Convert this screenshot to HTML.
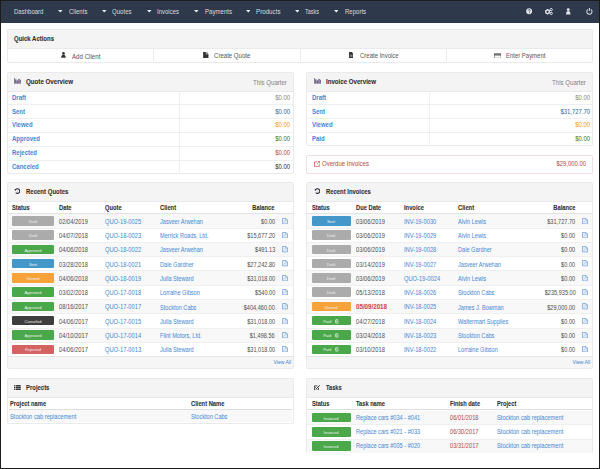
<!DOCTYPE html><html><head><meta charset="utf-8"><style>html,body{margin:0;padding:0;width:600px;height:469px;overflow:hidden;background:#fff;font-family:"Liberation Sans",sans-serif;}.t{position:absolute;display:flex;align-items:center;white-space:nowrap;line-height:1;}</style></head><body><div id="wrap" style="position:absolute;left:0;top:0;width:600px;height:469px;filter:none">
<div style="position:absolute;left:0px;top:0px;width:600.00px;height:22.60px;background:#2e3a4b"></div>
<div class="t" style="left:13.8px;top:4.80px;height:14.50px;justify-content:flex-start;font-size:7.32px;font-weight:400;color:#d3d6dc;transform:scaleX(0.8239);transform-origin:0 50%;-webkit-text-stroke:0.04px #d3d6dc;">Dashboard</div>
<div class="t" style="left:69px;top:4.80px;height:14.50px;justify-content:flex-start;font-size:7.32px;font-weight:400;color:#d3d6dc;transform:scaleX(0.8224);transform-origin:0 50%;-webkit-text-stroke:0.04px #d3d6dc;">Clients</div>
<svg style="position:absolute;left:58px;top:10.2px" width="4.6" height="2.6" viewBox="0 0 46 26"><path d="M0 0H46L23 26Z" fill="#e8eaee"/></svg>
<div class="t" style="left:112.4px;top:4.80px;height:14.50px;justify-content:flex-start;font-size:7.32px;font-weight:400;color:#d3d6dc;transform:scaleX(0.8305);transform-origin:0 50%;-webkit-text-stroke:0.04px #d3d6dc;">Quotes</div>
<svg style="position:absolute;left:102px;top:10.2px" width="4.6" height="2.6" viewBox="0 0 46 26"><path d="M0 0H46L23 26Z" fill="#e8eaee"/></svg>
<div class="t" style="left:157.4px;top:4.80px;height:14.50px;justify-content:flex-start;font-size:7.32px;font-weight:400;color:#d3d6dc;transform:scaleX(0.8193);transform-origin:0 50%;-webkit-text-stroke:0.04px #d3d6dc;">Invoices</div>
<svg style="position:absolute;left:147px;top:10.2px" width="4.6" height="2.6" viewBox="0 0 46 26"><path d="M0 0H46L23 26Z" fill="#e8eaee"/></svg>
<div class="t" style="left:204.5px;top:4.80px;height:14.50px;justify-content:flex-start;font-size:7.32px;font-weight:400;color:#d3d6dc;transform:scaleX(0.8296);transform-origin:0 50%;-webkit-text-stroke:0.04px #d3d6dc;">Payments</div>
<svg style="position:absolute;left:194px;top:10.2px" width="4.6" height="2.6" viewBox="0 0 46 26"><path d="M0 0H46L23 26Z" fill="#e8eaee"/></svg>
<div class="t" style="left:256px;top:4.80px;height:14.50px;justify-content:flex-start;font-size:7.32px;font-weight:400;color:#d3d6dc;transform:scaleX(0.8482);transform-origin:0 50%;-webkit-text-stroke:0.04px #d3d6dc;">Products</div>
<svg style="position:absolute;left:245.6px;top:10.2px" width="4.6" height="2.6" viewBox="0 0 46 26"><path d="M0 0H46L23 26Z" fill="#e8eaee"/></svg>
<div class="t" style="left:305px;top:4.80px;height:14.50px;justify-content:flex-start;font-size:7.32px;font-weight:400;color:#d3d6dc;transform:scaleX(0.7482);transform-origin:0 50%;-webkit-text-stroke:0.04px #d3d6dc;">Tasks</div>
<svg style="position:absolute;left:294.6px;top:10.2px" width="4.6" height="2.6" viewBox="0 0 46 26"><path d="M0 0H46L23 26Z" fill="#e8eaee"/></svg>
<div class="t" style="left:344.7px;top:4.80px;height:14.50px;justify-content:flex-start;font-size:7.32px;font-weight:400;color:#d3d6dc;transform:scaleX(0.8233);transform-origin:0 50%;-webkit-text-stroke:0.04px #d3d6dc;">Reports</div>
<svg style="position:absolute;left:333.6px;top:10.2px" width="4.6" height="2.6" viewBox="0 0 46 26"><path d="M0 0H46L23 26Z" fill="#e8eaee"/></svg>
<svg style="position:absolute;left:525.8px;top:8.4px" width="6.4" height="6.4" viewBox="0 0 14 14"><circle cx="7" cy="7" r="6.6" fill="#dfe2e6"/><path d="M4.9 5.4c0-1.3 1-2.1 2.2-2.1 1.3 0 2.1.8 2.1 1.8 0 1.4-1.6 1.5-1.6 2.8" stroke="#2e3a4b" stroke-width="1.5" fill="none"/><rect x="6.7" y="9.3" width="1.6" height="1.6" fill="#2e3a4b"/></svg>
<svg style="position:absolute;left:545.3px;top:8.2px" width="8" height="6.8" viewBox="0 0 16 13.6"><circle cx="5.2" cy="7.6" r="3.6" fill="none" stroke="#dfe2e6" stroke-width="2.6"/><rect x="4.1" y="2.2" width="2.2" height="2" fill="#dfe2e6" transform="rotate(0 5.2 7.6)"/><rect x="4.1" y="2.2" width="2.2" height="2" fill="#dfe2e6" transform="rotate(60 5.2 7.6)"/><rect x="4.1" y="2.2" width="2.2" height="2" fill="#dfe2e6" transform="rotate(120 5.2 7.6)"/><rect x="4.1" y="2.2" width="2.2" height="2" fill="#dfe2e6" transform="rotate(180 5.2 7.6)"/><rect x="4.1" y="2.2" width="2.2" height="2" fill="#dfe2e6" transform="rotate(240 5.2 7.6)"/><rect x="4.1" y="2.2" width="2.2" height="2" fill="#dfe2e6" transform="rotate(300 5.2 7.6)"/><circle cx="12.4" cy="3.2" r="2.3" fill="none" stroke="#dfe2e6" stroke-width="2"/><circle cx="12.4" cy="10.6" r="2.3" fill="none" stroke="#dfe2e6" stroke-width="2"/></svg>
<svg style="position:absolute;left:566.2px;top:8.3px" width="4.5" height="6.4" viewBox="0 0 9 13"><circle cx="4.5" cy="3.3" r="3" fill="#dfe2e6"/><path d="M0 13C0 8.5 1.5 6.2 4.5 6.2S9 8.5 9 13Z" fill="#dfe2e6"/></svg>
<svg style="position:absolute;left:585.8px;top:8.3px" width="6.8" height="6.6" viewBox="0 0 14 13.5"><path d="M4.2 2.8A5.4 5.4 0 1 0 9.8 2.8" fill="none" stroke="#dfe2e6" stroke-width="2.1"/><path d="M7 0.2V6.2" stroke="#dfe2e6" stroke-width="2.1"/></svg>
<div style="position:absolute;left:6.6px;top:29.4px;width:586.40px;height:33.40px;box-sizing:border-box;border:1px solid #eaeaea;border-radius:2px;background:#fff;overflow:hidden"><div style="position:absolute;left:0;top:0;right:0;height:17.80px;background:#f4f4f4;border-bottom:1px solid #eaeaea"></div></div>
<div class="t" style="left:14px;top:30.20px;height:18.80px;justify-content:flex-start;font-size:6.50px;font-weight:700;color:#333;transform:scaleX(0.9204);transform-origin:0 50%;-webkit-text-stroke:0.1px #333;">Quick Actions</div>
<div style="position:absolute;left:153.4px;top:47.7px;width:1.00px;height:13.60px;background:#eaeaea"></div>
<div style="position:absolute;left:299.8px;top:47.7px;width:1.00px;height:13.60px;background:#eaeaea"></div>
<div style="position:absolute;left:446.3px;top:47.7px;width:1.00px;height:13.60px;background:#eaeaea"></div>
<svg style="position:absolute;left:61.2px;top:52.4px" width="4.9" height="5.8" viewBox="0 0 10 12"><circle cx="5" cy="3" r="2.9" fill="#333"/><path d="M0.3 12C0.3 7.8 1.8 5.8 5 5.8C8.2 5.8 9.7 7.8 9.7 12Z" fill="#333"/></svg>
<div class="t" style="left:72px;top:49.30px;height:14.60px;justify-content:flex-start;font-size:7.01px;font-weight:400;color:#5a5a5a;transform:scaleX(0.8775);transform-origin:0 50%;-webkit-text-stroke:0.04px #5a5a5a;">Add Client</div>
<svg style="position:absolute;left:203.2px;top:52px" width="5.6" height="6.4" viewBox="0 0 10 12"><path d="M0 0H5L5 4H10V12H0Z" fill="#333"/><path d="M6 0L10 3.2H6Z" fill="#333"/></svg>
<div class="t" style="left:214px;top:49.30px;height:14.60px;justify-content:flex-start;font-size:6.96px;font-weight:400;color:#5a5a5a;transform:scaleX(0.8715);transform-origin:0 50%;-webkit-text-stroke:0.04px #5a5a5a;">Create Quote</div>
<svg style="position:absolute;left:348.6px;top:52.2px" width="4.6" height="6" viewBox="0 0 9 12"><path d="M0 0H5.5L9 3.5V12H0Z" fill="#333"/><path d="M2 6.5H7M2 8.5H7" stroke="#fff" stroke-width=".9"/></svg>
<div class="t" style="left:359.6px;top:49.30px;height:14.60px;justify-content:flex-start;font-size:6.92px;font-weight:400;color:#5a5a5a;transform:scaleX(0.8693);transform-origin:0 50%;-webkit-text-stroke:0.04px #5a5a5a;">Create Invoice</div>
<svg style="position:absolute;left:493.6px;top:52.8px" width="7.4" height="5.6" viewBox="0 0 15 11"><rect x="0.5" y="0.5" width="14" height="10" rx="1" fill="none" stroke="#333" stroke-width="1.3"/><rect x="0.5" y="2.5" width="14" height="2.2" fill="#333"/></svg>
<div class="t" style="left:505.6px;top:49.30px;height:14.60px;justify-content:flex-start;font-size:6.85px;font-weight:400;color:#5a5a5a;transform:scaleX(0.8691);transform-origin:0 50%;-webkit-text-stroke:0.04px #5a5a5a;">Enter Payment</div>
<div style="position:absolute;left:6.8px;top:71.6px;width:287.20px;height:102.10px;box-sizing:border-box;border:1px solid #eaeaea;border-radius:2px;background:#fff;overflow:hidden"><div style="position:absolute;left:0;top:0;right:0;height:18.40px;background:#f4f4f4;border-bottom:1px solid #eaeaea"></div></div>
<div class="t" style="left:26.3px;top:72.40px;height:19.40px;justify-content:flex-start;font-size:6.50px;font-weight:700;color:#333;transform:scaleX(0.9498);transform-origin:0 50%;-webkit-text-stroke:0.1px #333;">Quote Overview</div>
<svg style="position:absolute;left:13.8px;top:78.4px" width="7.4" height="5.6" viewBox="0 0 15 11"><path d="M0 0V11H15V9.6H1.4V0Z" fill="#5a4f6e"/><rect x="2.4" y="2.5" width="2.6" height="7.3" fill="#5f5078"/><rect x="5.6" y="4.6" width="2.6" height="5.2" fill="#6a5c84"/><rect x="8.8" y="1.6" width="2.6" height="8.2" fill="#5f5078"/><rect x="12" y="3.6" width="2.6" height="6.2" fill="#7a6c94"/></svg>
<div class="t" style="right:313.40px;top:72.80px;height:18.60px;justify-content:flex-end;font-size:7.01px;font-weight:400;color:#888;transform:scaleX(0.8696);transform-origin:100% 50%;-webkit-text-stroke:0.04px #888;">This Quarter</div>
<div class="t" style="left:12px;top:91.40px;height:13.78px;justify-content:flex-start;font-size:6.90px;font-weight:700;color:#4287d6;transform:scaleX(0.8696);transform-origin:0 50%;-webkit-text-stroke:0px #4287d6;">Draft</div>
<div class="t" style="right:309.80px;top:91.40px;height:13.78px;justify-content:flex-end;font-size:6.84px;font-weight:400;color:#8a8a8a;transform:scaleX(0.8696);transform-origin:100% 50%;-webkit-text-stroke:0.04px #8a8a8a;">$0.00</div>
<div style="position:absolute;left:8px;top:104.38333333333333px;width:284.60px;height:0.90px;background:#efefef"></div>
<div class="t" style="left:12px;top:105.18px;height:13.78px;justify-content:flex-start;font-size:6.90px;font-weight:700;color:#4287d6;transform:scaleX(0.8696);transform-origin:0 50%;-webkit-text-stroke:0px #4287d6;">Sent</div>
<div class="t" style="right:309.80px;top:105.18px;height:13.78px;justify-content:flex-end;font-size:6.84px;font-weight:400;color:#2f6ea8;transform:scaleX(0.8696);transform-origin:100% 50%;-webkit-text-stroke:0.04px #2f6ea8;">$0.00</div>
<div style="position:absolute;left:8px;top:118.16666666666667px;width:284.60px;height:0.90px;background:#efefef"></div>
<div class="t" style="left:12px;top:118.97px;height:13.78px;justify-content:flex-start;font-size:6.90px;font-weight:700;color:#4287d6;transform:scaleX(0.8696);transform-origin:0 50%;-webkit-text-stroke:0px #4287d6;">Viewed</div>
<div class="t" style="right:309.80px;top:118.97px;height:13.78px;justify-content:flex-end;font-size:6.84px;font-weight:400;color:#f39c2c;transform:scaleX(0.8696);transform-origin:100% 50%;-webkit-text-stroke:0.04px #f39c2c;">$0.00</div>
<div style="position:absolute;left:8px;top:131.95px;width:284.60px;height:0.90px;background:#efefef"></div>
<div class="t" style="left:12px;top:132.75px;height:13.78px;justify-content:flex-start;font-size:6.90px;font-weight:700;color:#4287d6;transform:scaleX(0.8696);transform-origin:0 50%;-webkit-text-stroke:0px #4287d6;">Approved</div>
<div class="t" style="right:309.80px;top:132.75px;height:13.78px;justify-content:flex-end;font-size:6.84px;font-weight:400;color:#2f7f2f;transform:scaleX(0.8696);transform-origin:100% 50%;-webkit-text-stroke:0.04px #2f7f2f;">$0.00</div>
<div style="position:absolute;left:8px;top:145.73333333333335px;width:284.60px;height:0.90px;background:#efefef"></div>
<div class="t" style="left:12px;top:146.53px;height:13.78px;justify-content:flex-start;font-size:6.90px;font-weight:700;color:#4287d6;transform:scaleX(0.8696);transform-origin:0 50%;-webkit-text-stroke:0px #4287d6;">Rejected</div>
<div class="t" style="right:309.80px;top:146.53px;height:13.78px;justify-content:flex-end;font-size:6.84px;font-weight:400;color:#b94a48;transform:scaleX(0.8696);transform-origin:100% 50%;-webkit-text-stroke:0.04px #b94a48;">$0.00</div>
<div style="position:absolute;left:8px;top:159.51666666666668px;width:284.60px;height:0.90px;background:#efefef"></div>
<div class="t" style="left:12px;top:160.32px;height:13.78px;justify-content:flex-start;font-size:6.90px;font-weight:700;color:#4287d6;transform:scaleX(0.8696);transform-origin:0 50%;-webkit-text-stroke:0px #4287d6;">Canceled</div>
<div class="t" style="right:309.80px;top:160.32px;height:13.78px;justify-content:flex-end;font-size:6.84px;font-weight:400;color:#333;transform:scaleX(0.8696);transform-origin:100% 50%;-webkit-text-stroke:0.04px #333;">$0.00</div>
<div style="position:absolute;left:179.3px;top:90.6px;width:0.90px;height:81.70px;background:#efefef"></div>
<div style="position:absolute;left:306px;top:71.6px;width:287.00px;height:74.40px;box-sizing:border-box;border:1px solid #eaeaea;border-radius:2px;background:#fff;overflow:hidden"><div style="position:absolute;left:0;top:0;right:0;height:18.40px;background:#f4f4f4;border-bottom:1px solid #eaeaea"></div></div>
<div class="t" style="left:325.8px;top:72.40px;height:19.40px;justify-content:flex-start;font-size:6.50px;font-weight:700;color:#333;transform:scaleX(0.9415);transform-origin:0 50%;-webkit-text-stroke:0.1px #333;">Invoice Overview</div>
<svg style="position:absolute;left:313.6px;top:78.4px" width="7.4" height="5.6" viewBox="0 0 15 11"><path d="M0 0V11H15V9.6H1.4V0Z" fill="#5a4f6e"/><rect x="2.4" y="2.5" width="2.6" height="7.3" fill="#5f5078"/><rect x="5.6" y="4.6" width="2.6" height="5.2" fill="#6a5c84"/><rect x="8.8" y="1.6" width="2.6" height="8.2" fill="#5f5078"/><rect x="12" y="3.6" width="2.6" height="6.2" fill="#7a6c94"/></svg>
<div class="t" style="right:14.30px;top:72.80px;height:18.60px;justify-content:flex-end;font-size:7.01px;font-weight:400;color:#888;transform:scaleX(0.8696);transform-origin:100% 50%;-webkit-text-stroke:0.04px #888;">This Quarter</div>
<div class="t" style="left:311.5px;top:91.40px;height:13.78px;justify-content:flex-start;font-size:6.90px;font-weight:700;color:#4287d6;transform:scaleX(0.8696);transform-origin:0 50%;-webkit-text-stroke:0px #4287d6;">Draft</div>
<div class="t" style="right:9.80px;top:91.40px;height:13.78px;justify-content:flex-end;font-size:6.84px;font-weight:400;color:#8a8a8a;transform:scaleX(0.8696);transform-origin:100% 50%;-webkit-text-stroke:0.04px #8a8a8a;">$0.00</div>
<div style="position:absolute;left:307.5px;top:104.38333333333333px;width:284.10px;height:0.90px;background:#efefef"></div>
<div class="t" style="left:311.5px;top:105.18px;height:13.78px;justify-content:flex-start;font-size:6.90px;font-weight:700;color:#4287d6;transform:scaleX(0.8696);transform-origin:0 50%;-webkit-text-stroke:0px #4287d6;">Sent</div>
<div class="t" style="right:9.80px;top:105.18px;height:13.78px;justify-content:flex-end;font-size:6.84px;font-weight:400;color:#2f6ea8;transform:scaleX(0.8696);transform-origin:100% 50%;-webkit-text-stroke:0.04px #2f6ea8;">$31,727.70</div>
<div style="position:absolute;left:307.5px;top:118.16666666666667px;width:284.10px;height:0.90px;background:#efefef"></div>
<div class="t" style="left:311.5px;top:118.97px;height:13.78px;justify-content:flex-start;font-size:6.90px;font-weight:700;color:#4287d6;transform:scaleX(0.8696);transform-origin:0 50%;-webkit-text-stroke:0px #4287d6;">Viewed</div>
<div class="t" style="right:9.80px;top:118.97px;height:13.78px;justify-content:flex-end;font-size:6.84px;font-weight:400;color:#f39c2c;transform:scaleX(0.8696);transform-origin:100% 50%;-webkit-text-stroke:0.04px #f39c2c;">$0.00</div>
<div style="position:absolute;left:307.5px;top:131.95px;width:284.10px;height:0.90px;background:#efefef"></div>
<div class="t" style="left:311.5px;top:132.75px;height:13.78px;justify-content:flex-start;font-size:6.90px;font-weight:700;color:#4287d6;transform:scaleX(0.8696);transform-origin:0 50%;-webkit-text-stroke:0px #4287d6;">Paid</div>
<div class="t" style="right:9.80px;top:132.75px;height:13.78px;justify-content:flex-end;font-size:6.84px;font-weight:400;color:#2f7f2f;transform:scaleX(0.8696);transform-origin:100% 50%;-webkit-text-stroke:0.04px #2f7f2f;">$0.00</div>
<div style="position:absolute;left:429px;top:90.6px;width:0.90px;height:54.00px;background:#efefef"></div>
<div style="position:absolute;left:306px;top:154.5px;width:287px;height:19px;box-sizing:border-box;border:1px solid #f2dfe2;border-radius:2px;background:#fff"></div>
<svg style="position:absolute;left:314px;top:160.6px" width="6.2" height="6.2" viewBox="0 0 12 12"><path d="M6 1.8H1V11H10.2V6" fill="none" stroke="#c0504d" stroke-width="1.4"/><path d="M6 6L11 1M7.5 0.8H11.2V4.5" fill="none" stroke="#c0504d" stroke-width="1.4"/></svg>
<div class="t" style="left:322px;top:155.50px;height:18.60px;justify-content:flex-start;font-size:6.95px;font-weight:400;color:#b5504d;transform:scaleX(0.8696);transform-origin:0 50%;-webkit-text-stroke:0.04px #b5504d;">Overdue Invoices</div>
<div class="t" style="right:13.80px;top:155.50px;height:18.60px;justify-content:flex-end;font-size:6.79px;font-weight:400;color:#b5504d;transform:scaleX(0.8696);transform-origin:100% 50%;-webkit-text-stroke:0.04px #b5504d;">$29,000.00</div>
<div style="position:absolute;left:6.6px;top:181.8px;width:287.40px;height:187.00px;box-sizing:border-box;border:1px solid #eaeaea;border-radius:2px;background:#fff;overflow:hidden"><div style="position:absolute;left:0;top:0;right:0;height:18.20px;background:#f4f4f4;border-bottom:1px solid #eaeaea"></div></div>
<div class="t" style="left:12px;top:201.40px;height:13.10px;justify-content:flex-start;font-size:6.67px;font-weight:700;color:#333;transform:scaleX(0.8696);transform-origin:0 50%;-webkit-text-stroke:0.1px #333;">Status</div>
<div class="t" style="left:59px;top:201.40px;height:13.10px;justify-content:flex-start;font-size:6.67px;font-weight:700;color:#333;transform:scaleX(0.8696);transform-origin:0 50%;-webkit-text-stroke:0.1px #333;">Date</div>
<div class="t" style="left:105.3px;top:201.40px;height:13.10px;justify-content:flex-start;font-size:6.67px;font-weight:700;color:#333;transform:scaleX(0.8696);transform-origin:0 50%;-webkit-text-stroke:0.1px #333;">Quote</div>
<div class="t" style="left:159.9px;top:201.40px;height:13.10px;justify-content:flex-start;font-size:6.67px;font-weight:700;color:#333;transform:scaleX(0.8696);transform-origin:0 50%;-webkit-text-stroke:0.1px #333;">Client</div>
<div class="t" style="right:325.00px;top:201.40px;height:13.10px;justify-content:flex-end;font-size:6.67px;font-weight:700;color:#333;transform:scaleX(0.8696);transform-origin:100% 50%;-webkit-text-stroke:0.1px #333;">Balance</div>
<div style="position:absolute;left:7.6px;top:212.9px;width:285.40px;height:1.00px;background:#e2e2e2"></div>
<div style="position:absolute;left:7.6px;top:214.0px;width:285.40px;height:13.67px;background:#f8f8f8"></div>
<div style="position:absolute;left:12px;top:216.09px;width:42.40px;height:9.5px;background:#ababab;border-radius:1.2px"></div>
<div class="t" style="left:-66.8px;width:200px;top:217.39px;height:9.50px;justify-content:center;font-size:4.32px;font-weight:400;color:#f0f0f0;transform:scaleX(0.9259);transform-origin:50% 50%;-webkit-text-stroke:0px #f0f0f0;">Draft</div>
<div class="t" style="left:59px;top:215.00px;height:14.27px;justify-content:flex-start;font-size:6.67px;font-weight:400;color:#555;transform:scaleX(0.8696);transform-origin:0 50%;-webkit-text-stroke:0.04px #555;">02/04/2019</div>
<div class="t" style="left:105.3px;top:215.00px;height:14.27px;justify-content:flex-start;font-size:6.61px;font-weight:400;color:#4a8cd8;transform:scaleX(0.8696);transform-origin:0 50%;-webkit-text-stroke:0.04px #4a8cd8;">QUO-19-0025</div>
<div class="t" style="left:159.9px;top:215.00px;height:14.27px;justify-content:flex-start;font-size:6.44px;font-weight:400;color:#4a8cd8;transform:scaleX(0.8696);transform-origin:0 50%;-webkit-text-stroke:0.04px #4a8cd8;">Jasveer Arwehan</div>
<div class="t" style="right:325.00px;top:215.00px;height:14.27px;justify-content:flex-end;font-size:6.44px;font-weight:400;color:#555;transform:scaleX(0.8696);transform-origin:100% 50%;-webkit-text-stroke:0.04px #555;">$0.00</div>
<svg style="position:absolute;left:282px;top:217.64px" width="6" height="6.4" viewBox="0 0 12 13"><path d="M1 1H7.8L11 4.2V12H1Z" fill="#eef3fc" stroke="#6d9be0" stroke-width="1.5"/><path d="M7.5 1V4.5H11" fill="none" stroke="#6d9be0" stroke-width="1.2"/><path d="M3.2 10C4.5 8.5 5 7 5 5.5C6 7.5 7.5 8.5 9 8.8" fill="none" stroke="#9dbcec" stroke-width="1"/></svg>
<div style="position:absolute;left:7.6px;top:227.67000000000002px;width:285.40px;height:0.80px;background:#efefef"></div>
<div style="position:absolute;left:12px;top:230.36px;width:42.40px;height:9.5px;background:#ababab;border-radius:1.2px"></div>
<div class="t" style="left:-66.8px;width:200px;top:231.66px;height:9.50px;justify-content:center;font-size:4.32px;font-weight:400;color:#f0f0f0;transform:scaleX(0.9259);transform-origin:50% 50%;-webkit-text-stroke:0px #f0f0f0;">Draft</div>
<div class="t" style="left:59px;top:229.27px;height:14.27px;justify-content:flex-start;font-size:6.67px;font-weight:400;color:#555;transform:scaleX(0.8696);transform-origin:0 50%;-webkit-text-stroke:0.04px #555;">04/07/2018</div>
<div class="t" style="left:105.3px;top:229.27px;height:14.27px;justify-content:flex-start;font-size:6.61px;font-weight:400;color:#4a8cd8;transform:scaleX(0.8696);transform-origin:0 50%;-webkit-text-stroke:0.04px #4a8cd8;">QUO-18-0023</div>
<div class="t" style="left:159.9px;top:229.27px;height:14.27px;justify-content:flex-start;font-size:6.44px;font-weight:400;color:#4a8cd8;transform:scaleX(0.8696);transform-origin:0 50%;-webkit-text-stroke:0.04px #4a8cd8;">Merrick Roads, Ltd.</div>
<div class="t" style="right:325.00px;top:229.27px;height:14.27px;justify-content:flex-end;font-size:6.44px;font-weight:400;color:#555;transform:scaleX(0.8696);transform-origin:100% 50%;-webkit-text-stroke:0.04px #555;">$15,677.20</div>
<svg style="position:absolute;left:282px;top:231.91px" width="6" height="6.4" viewBox="0 0 12 13"><path d="M1 1H7.8L11 4.2V12H1Z" fill="#eef3fc" stroke="#6d9be0" stroke-width="1.5"/><path d="M7.5 1V4.5H11" fill="none" stroke="#6d9be0" stroke-width="1.2"/><path d="M3.2 10C4.5 8.5 5 7 5 5.5C6 7.5 7.5 8.5 9 8.8" fill="none" stroke="#9dbcec" stroke-width="1"/></svg>
<div style="position:absolute;left:7.6px;top:242.54px;width:285.40px;height:13.67px;background:#f8f8f8"></div>
<div style="position:absolute;left:7.6px;top:241.94px;width:285.40px;height:0.80px;background:#efefef"></div>
<div style="position:absolute;left:12px;top:244.62px;width:42.40px;height:9.5px;background:#4aa84a;border-radius:1.2px"></div>
<div class="t" style="left:-66.8px;width:200px;top:245.93px;height:9.50px;justify-content:center;font-size:4.32px;font-weight:400;color:#f0f0f0;transform:scaleX(0.9259);transform-origin:50% 50%;-webkit-text-stroke:0px #f0f0f0;">Approved</div>
<div class="t" style="left:59px;top:243.54px;height:14.27px;justify-content:flex-start;font-size:6.67px;font-weight:400;color:#555;transform:scaleX(0.8696);transform-origin:0 50%;-webkit-text-stroke:0.04px #555;">04/06/2018</div>
<div class="t" style="left:105.3px;top:243.54px;height:14.27px;justify-content:flex-start;font-size:6.61px;font-weight:400;color:#4a8cd8;transform:scaleX(0.8696);transform-origin:0 50%;-webkit-text-stroke:0.04px #4a8cd8;">QUO-18-0022</div>
<div class="t" style="left:159.9px;top:243.54px;height:14.27px;justify-content:flex-start;font-size:6.44px;font-weight:400;color:#4a8cd8;transform:scaleX(0.8696);transform-origin:0 50%;-webkit-text-stroke:0.04px #4a8cd8;">Jasveer Arwehan</div>
<div class="t" style="right:325.00px;top:243.54px;height:14.27px;justify-content:flex-end;font-size:6.44px;font-weight:400;color:#555;transform:scaleX(0.8696);transform-origin:100% 50%;-webkit-text-stroke:0.04px #555;">$491.13</div>
<svg style="position:absolute;left:282px;top:246.18px" width="6" height="6.4" viewBox="0 0 12 13"><path d="M1 1H7.8L11 4.2V12H1Z" fill="#eef3fc" stroke="#6d9be0" stroke-width="1.5"/><path d="M7.5 1V4.5H11" fill="none" stroke="#6d9be0" stroke-width="1.2"/><path d="M3.2 10C4.5 8.5 5 7 5 5.5C6 7.5 7.5 8.5 9 8.8" fill="none" stroke="#9dbcec" stroke-width="1"/></svg>
<div style="position:absolute;left:7.6px;top:256.21000000000004px;width:285.40px;height:0.80px;background:#efefef"></div>
<div style="position:absolute;left:12px;top:258.90px;width:42.40px;height:9.5px;background:#4497c9;border-radius:1.2px"></div>
<div class="t" style="left:-66.8px;width:200px;top:260.20px;height:9.50px;justify-content:center;font-size:4.32px;font-weight:400;color:#f0f0f0;transform:scaleX(0.9259);transform-origin:50% 50%;-webkit-text-stroke:0px #f0f0f0;">Sent</div>
<div class="t" style="left:59px;top:257.81px;height:14.27px;justify-content:flex-start;font-size:6.67px;font-weight:400;color:#555;transform:scaleX(0.8696);transform-origin:0 50%;-webkit-text-stroke:0.04px #555;">03/28/2018</div>
<div class="t" style="left:105.3px;top:257.81px;height:14.27px;justify-content:flex-start;font-size:6.61px;font-weight:400;color:#4a8cd8;transform:scaleX(0.8696);transform-origin:0 50%;-webkit-text-stroke:0.04px #4a8cd8;">QUO-18-0021</div>
<div class="t" style="left:159.9px;top:257.81px;height:14.27px;justify-content:flex-start;font-size:6.44px;font-weight:400;color:#4a8cd8;transform:scaleX(0.8696);transform-origin:0 50%;-webkit-text-stroke:0.04px #4a8cd8;">Dale Gardner</div>
<div class="t" style="right:325.00px;top:257.81px;height:14.27px;justify-content:flex-end;font-size:6.44px;font-weight:400;color:#555;transform:scaleX(0.8696);transform-origin:100% 50%;-webkit-text-stroke:0.04px #555;">$27,242.80</div>
<svg style="position:absolute;left:282px;top:260.45px" width="6" height="6.4" viewBox="0 0 12 13"><path d="M1 1H7.8L11 4.2V12H1Z" fill="#eef3fc" stroke="#6d9be0" stroke-width="1.5"/><path d="M7.5 1V4.5H11" fill="none" stroke="#6d9be0" stroke-width="1.2"/><path d="M3.2 10C4.5 8.5 5 7 5 5.5C6 7.5 7.5 8.5 9 8.8" fill="none" stroke="#9dbcec" stroke-width="1"/></svg>
<div style="position:absolute;left:7.6px;top:271.08000000000004px;width:285.40px;height:13.67px;background:#f8f8f8"></div>
<div style="position:absolute;left:7.6px;top:270.48px;width:285.40px;height:0.80px;background:#efefef"></div>
<div style="position:absolute;left:12px;top:273.17px;width:42.40px;height:9.5px;background:#f6a33a;border-radius:1.2px"></div>
<div class="t" style="left:-66.8px;width:200px;top:274.47px;height:9.50px;justify-content:center;font-size:4.32px;font-weight:400;color:#f0f0f0;transform:scaleX(0.9259);transform-origin:50% 50%;-webkit-text-stroke:0px #f0f0f0;">Viewed</div>
<div class="t" style="left:59px;top:272.08px;height:14.27px;justify-content:flex-start;font-size:6.67px;font-weight:400;color:#555;transform:scaleX(0.8696);transform-origin:0 50%;-webkit-text-stroke:0.04px #555;">04/06/2018</div>
<div class="t" style="left:105.3px;top:272.08px;height:14.27px;justify-content:flex-start;font-size:6.61px;font-weight:400;color:#4a8cd8;transform:scaleX(0.8696);transform-origin:0 50%;-webkit-text-stroke:0.04px #4a8cd8;">QUO-18-0019</div>
<div class="t" style="left:159.9px;top:272.08px;height:14.27px;justify-content:flex-start;font-size:6.44px;font-weight:400;color:#4a8cd8;transform:scaleX(0.8696);transform-origin:0 50%;-webkit-text-stroke:0.04px #4a8cd8;">Julia Steward</div>
<div class="t" style="right:325.00px;top:272.08px;height:14.27px;justify-content:flex-end;font-size:6.44px;font-weight:400;color:#555;transform:scaleX(0.8696);transform-origin:100% 50%;-webkit-text-stroke:0.04px #555;">$31,018.00</div>
<svg style="position:absolute;left:282px;top:274.72px" width="6" height="6.4" viewBox="0 0 12 13"><path d="M1 1H7.8L11 4.2V12H1Z" fill="#eef3fc" stroke="#6d9be0" stroke-width="1.5"/><path d="M7.5 1V4.5H11" fill="none" stroke="#6d9be0" stroke-width="1.2"/><path d="M3.2 10C4.5 8.5 5 7 5 5.5C6 7.5 7.5 8.5 9 8.8" fill="none" stroke="#9dbcec" stroke-width="1"/></svg>
<div style="position:absolute;left:7.6px;top:284.75px;width:285.40px;height:0.80px;background:#efefef"></div>
<div style="position:absolute;left:12px;top:287.44px;width:42.40px;height:9.5px;background:#4aa84a;border-radius:1.2px"></div>
<div class="t" style="left:-66.8px;width:200px;top:288.74px;height:9.50px;justify-content:center;font-size:4.32px;font-weight:400;color:#f0f0f0;transform:scaleX(0.9259);transform-origin:50% 50%;-webkit-text-stroke:0px #f0f0f0;">Approved</div>
<div class="t" style="left:59px;top:286.35px;height:14.27px;justify-content:flex-start;font-size:6.67px;font-weight:400;color:#555;transform:scaleX(0.8696);transform-origin:0 50%;-webkit-text-stroke:0.04px #555;">03/02/2018</div>
<div class="t" style="left:105.3px;top:286.35px;height:14.27px;justify-content:flex-start;font-size:6.61px;font-weight:400;color:#4a8cd8;transform:scaleX(0.8696);transform-origin:0 50%;-webkit-text-stroke:0.04px #4a8cd8;">QUO-17-0018</div>
<div class="t" style="left:159.9px;top:286.35px;height:14.27px;justify-content:flex-start;font-size:6.44px;font-weight:400;color:#4a8cd8;transform:scaleX(0.8696);transform-origin:0 50%;-webkit-text-stroke:0.04px #4a8cd8;">Lorraine Gibson</div>
<div class="t" style="right:325.00px;top:286.35px;height:14.27px;justify-content:flex-end;font-size:6.44px;font-weight:400;color:#555;transform:scaleX(0.8696);transform-origin:100% 50%;-webkit-text-stroke:0.04px #555;">$540.00</div>
<svg style="position:absolute;left:282px;top:288.99px" width="6" height="6.4" viewBox="0 0 12 13"><path d="M1 1H7.8L11 4.2V12H1Z" fill="#eef3fc" stroke="#6d9be0" stroke-width="1.5"/><path d="M7.5 1V4.5H11" fill="none" stroke="#6d9be0" stroke-width="1.2"/><path d="M3.2 10C4.5 8.5 5 7 5 5.5C6 7.5 7.5 8.5 9 8.8" fill="none" stroke="#9dbcec" stroke-width="1"/></svg>
<div style="position:absolute;left:7.6px;top:299.62px;width:285.40px;height:13.67px;background:#f8f8f8"></div>
<div style="position:absolute;left:7.6px;top:299.02px;width:285.40px;height:0.80px;background:#efefef"></div>
<div style="position:absolute;left:12px;top:301.70px;width:42.40px;height:9.5px;background:#4aa84a;border-radius:1.2px"></div>
<div class="t" style="left:-66.8px;width:200px;top:303.00px;height:9.50px;justify-content:center;font-size:4.32px;font-weight:400;color:#f0f0f0;transform:scaleX(0.9259);transform-origin:50% 50%;-webkit-text-stroke:0px #f0f0f0;">Approved</div>
<div class="t" style="left:59px;top:300.62px;height:14.27px;justify-content:flex-start;font-size:6.67px;font-weight:400;color:#555;transform:scaleX(0.8696);transform-origin:0 50%;-webkit-text-stroke:0.04px #555;">08/16/2017</div>
<div class="t" style="left:105.3px;top:300.62px;height:14.27px;justify-content:flex-start;font-size:6.61px;font-weight:400;color:#4a8cd8;transform:scaleX(0.8696);transform-origin:0 50%;-webkit-text-stroke:0.04px #4a8cd8;">QUO-17-0017</div>
<div class="t" style="left:159.9px;top:300.62px;height:14.27px;justify-content:flex-start;font-size:6.44px;font-weight:400;color:#4a8cd8;transform:scaleX(0.8696);transform-origin:0 50%;-webkit-text-stroke:0.04px #4a8cd8;">Stockton Cabs</div>
<div class="t" style="right:325.00px;top:300.62px;height:14.27px;justify-content:flex-end;font-size:6.44px;font-weight:400;color:#555;transform:scaleX(0.8696);transform-origin:100% 50%;-webkit-text-stroke:0.04px #555;">$404,460.00</div>
<svg style="position:absolute;left:282px;top:303.25px" width="6" height="6.4" viewBox="0 0 12 13"><path d="M1 1H7.8L11 4.2V12H1Z" fill="#eef3fc" stroke="#6d9be0" stroke-width="1.5"/><path d="M7.5 1V4.5H11" fill="none" stroke="#6d9be0" stroke-width="1.2"/><path d="M3.2 10C4.5 8.5 5 7 5 5.5C6 7.5 7.5 8.5 9 8.8" fill="none" stroke="#9dbcec" stroke-width="1"/></svg>
<div style="position:absolute;left:7.6px;top:313.29px;width:285.40px;height:0.80px;background:#efefef"></div>
<div style="position:absolute;left:12px;top:315.98px;width:42.40px;height:9.5px;background:#3e3e3e;border-radius:1.2px"></div>
<div class="t" style="left:-66.8px;width:200px;top:317.28px;height:9.50px;justify-content:center;font-size:4.32px;font-weight:400;color:#f0f0f0;transform:scaleX(0.9259);transform-origin:50% 50%;-webkit-text-stroke:0px #f0f0f0;">Canceled</div>
<div class="t" style="left:59px;top:314.89px;height:14.27px;justify-content:flex-start;font-size:6.67px;font-weight:400;color:#555;transform:scaleX(0.8696);transform-origin:0 50%;-webkit-text-stroke:0.04px #555;">04/06/2017</div>
<div class="t" style="left:105.3px;top:314.89px;height:14.27px;justify-content:flex-start;font-size:6.61px;font-weight:400;color:#4a8cd8;transform:scaleX(0.8696);transform-origin:0 50%;-webkit-text-stroke:0.04px #4a8cd8;">QUO-17-0015</div>
<div class="t" style="left:159.9px;top:314.89px;height:14.27px;justify-content:flex-start;font-size:6.44px;font-weight:400;color:#4a8cd8;transform:scaleX(0.8696);transform-origin:0 50%;-webkit-text-stroke:0.04px #4a8cd8;">Julia Steward</div>
<div class="t" style="right:325.00px;top:314.89px;height:14.27px;justify-content:flex-end;font-size:6.44px;font-weight:400;color:#555;transform:scaleX(0.8696);transform-origin:100% 50%;-webkit-text-stroke:0.04px #555;">$31,018.00</div>
<svg style="position:absolute;left:282px;top:317.53px" width="6" height="6.4" viewBox="0 0 12 13"><path d="M1 1H7.8L11 4.2V12H1Z" fill="#eef3fc" stroke="#6d9be0" stroke-width="1.5"/><path d="M7.5 1V4.5H11" fill="none" stroke="#6d9be0" stroke-width="1.2"/><path d="M3.2 10C4.5 8.5 5 7 5 5.5C6 7.5 7.5 8.5 9 8.8" fill="none" stroke="#9dbcec" stroke-width="1"/></svg>
<div style="position:absolute;left:7.6px;top:328.16px;width:285.40px;height:13.67px;background:#f8f8f8"></div>
<div style="position:absolute;left:7.6px;top:327.56px;width:285.40px;height:0.80px;background:#efefef"></div>
<div style="position:absolute;left:12px;top:330.25px;width:42.40px;height:9.5px;background:#4aa84a;border-radius:1.2px"></div>
<div class="t" style="left:-66.8px;width:200px;top:331.55px;height:9.50px;justify-content:center;font-size:4.32px;font-weight:400;color:#f0f0f0;transform:scaleX(0.9259);transform-origin:50% 50%;-webkit-text-stroke:0px #f0f0f0;">Approved</div>
<div class="t" style="left:59px;top:329.16px;height:14.27px;justify-content:flex-start;font-size:6.67px;font-weight:400;color:#555;transform:scaleX(0.8696);transform-origin:0 50%;-webkit-text-stroke:0.04px #555;">04/10/2017</div>
<div class="t" style="left:105.3px;top:329.16px;height:14.27px;justify-content:flex-start;font-size:6.61px;font-weight:400;color:#4a8cd8;transform:scaleX(0.8696);transform-origin:0 50%;-webkit-text-stroke:0.04px #4a8cd8;">QUO-17-0014</div>
<div class="t" style="left:159.9px;top:329.16px;height:14.27px;justify-content:flex-start;font-size:6.44px;font-weight:400;color:#4a8cd8;transform:scaleX(0.8696);transform-origin:0 50%;-webkit-text-stroke:0.04px #4a8cd8;">Flint Motors, Ltd.</div>
<div class="t" style="right:325.00px;top:329.16px;height:14.27px;justify-content:flex-end;font-size:6.44px;font-weight:400;color:#555;transform:scaleX(0.8696);transform-origin:100% 50%;-webkit-text-stroke:0.04px #555;">$1,498.56</div>
<svg style="position:absolute;left:282px;top:331.80px" width="6" height="6.4" viewBox="0 0 12 13"><path d="M1 1H7.8L11 4.2V12H1Z" fill="#eef3fc" stroke="#6d9be0" stroke-width="1.5"/><path d="M7.5 1V4.5H11" fill="none" stroke="#6d9be0" stroke-width="1.2"/><path d="M3.2 10C4.5 8.5 5 7 5 5.5C6 7.5 7.5 8.5 9 8.8" fill="none" stroke="#9dbcec" stroke-width="1"/></svg>
<div style="position:absolute;left:7.6px;top:341.83000000000004px;width:285.40px;height:0.80px;background:#efefef"></div>
<div style="position:absolute;left:12px;top:344.52px;width:42.40px;height:9.5px;background:#d46262;border-radius:1.2px"></div>
<div class="t" style="left:-66.8px;width:200px;top:345.82px;height:9.50px;justify-content:center;font-size:4.32px;font-weight:400;color:#f0f0f0;transform:scaleX(0.9259);transform-origin:50% 50%;-webkit-text-stroke:0px #f0f0f0;">Rejected</div>
<div class="t" style="left:59px;top:343.43px;height:14.27px;justify-content:flex-start;font-size:6.67px;font-weight:400;color:#555;transform:scaleX(0.8696);transform-origin:0 50%;-webkit-text-stroke:0.04px #555;">04/06/2017</div>
<div class="t" style="left:105.3px;top:343.43px;height:14.27px;justify-content:flex-start;font-size:6.61px;font-weight:400;color:#4a8cd8;transform:scaleX(0.8696);transform-origin:0 50%;-webkit-text-stroke:0.04px #4a8cd8;">QUO-17-0013</div>
<div class="t" style="left:159.9px;top:343.43px;height:14.27px;justify-content:flex-start;font-size:6.44px;font-weight:400;color:#4a8cd8;transform:scaleX(0.8696);transform-origin:0 50%;-webkit-text-stroke:0.04px #4a8cd8;">Julia Steward</div>
<div class="t" style="right:325.00px;top:343.43px;height:14.27px;justify-content:flex-end;font-size:6.44px;font-weight:400;color:#555;transform:scaleX(0.8696);transform-origin:100% 50%;-webkit-text-stroke:0.04px #555;">$31,018.00</div>
<svg style="position:absolute;left:282px;top:346.07px" width="6" height="6.4" viewBox="0 0 12 13"><path d="M1 1H7.8L11 4.2V12H1Z" fill="#eef3fc" stroke="#6d9be0" stroke-width="1.5"/><path d="M7.5 1V4.5H11" fill="none" stroke="#6d9be0" stroke-width="1.2"/><path d="M3.2 10C4.5 8.5 5 7 5 5.5C6 7.5 7.5 8.5 9 8.8" fill="none" stroke="#9dbcec" stroke-width="1"/></svg>
<div style="position:absolute;left:7.6px;top:356.1px;width:285.40px;height:0.80px;background:#e6e6e6"></div>
<div style="position:absolute;left:7.6px;top:356.90000000000003px;width:285.40px;height:10.90px;background:#f6f6f6"></div>
<div class="t" style="right:309.20px;top:356.90px;height:12.20px;justify-content:flex-end;font-size:5.75px;font-weight:400;color:#4a8cd8;transform:scaleX(0.8737);transform-origin:100% 50%;-webkit-text-stroke:0.04px #4a8cd8;">View All</div>
<div class="t" style="left:25.6px;top:183.10px;height:18.30px;justify-content:flex-start;font-size:6.50px;font-weight:700;color:#333;transform:scaleX(0.9244);transform-origin:0 50%;-webkit-text-stroke:0.1px #333;">Recent Quotes</div>
<svg style="position:absolute;left:13.8px;top:188.3px" width="6.6" height="6.2" viewBox="0 0 13.2 12.4"><path d="M3.0 3.9A4.6 4.6 0 1 1 3.5 9.2" fill="none" stroke="#2a2a3a" stroke-width="2.1"/><circle cx="2.8" cy="3.7" r="1.6" fill="#2a2a3a"/><circle cx="7" cy="6.2" r="1" fill="#999"/></svg>
<div style="position:absolute;left:306px;top:181.8px;width:287.00px;height:187.00px;box-sizing:border-box;border:1px solid #eaeaea;border-radius:2px;background:#fff;overflow:hidden"><div style="position:absolute;left:0;top:0;right:0;height:18.20px;background:#f4f4f4;border-bottom:1px solid #eaeaea"></div></div>
<div class="t" style="left:311.5px;top:201.40px;height:13.10px;justify-content:flex-start;font-size:6.67px;font-weight:700;color:#333;transform:scaleX(0.8696);transform-origin:0 50%;-webkit-text-stroke:0.1px #333;">Status</div>
<div class="t" style="left:355.5px;top:201.40px;height:13.10px;justify-content:flex-start;font-size:6.67px;font-weight:700;color:#333;transform:scaleX(0.8696);transform-origin:0 50%;-webkit-text-stroke:0.1px #333;">Due Date</div>
<div class="t" style="left:404px;top:201.40px;height:13.10px;justify-content:flex-start;font-size:6.67px;font-weight:700;color:#333;transform:scaleX(0.8696);transform-origin:0 50%;-webkit-text-stroke:0.1px #333;">Invoice</div>
<div class="t" style="left:458.1px;top:201.40px;height:13.10px;justify-content:flex-start;font-size:6.67px;font-weight:700;color:#333;transform:scaleX(0.8696);transform-origin:0 50%;-webkit-text-stroke:0.1px #333;">Client</div>
<div class="t" style="right:24.50px;top:201.40px;height:13.10px;justify-content:flex-end;font-size:6.67px;font-weight:700;color:#333;transform:scaleX(0.8696);transform-origin:100% 50%;-webkit-text-stroke:0.1px #333;">Balance</div>
<div style="position:absolute;left:307px;top:212.9px;width:285.00px;height:1.00px;background:#e2e2e2"></div>
<div style="position:absolute;left:307px;top:214.0px;width:285.00px;height:13.67px;background:#f8f8f8"></div>
<div style="position:absolute;left:311.5px;top:216.09px;width:39.40px;height:9.5px;background:#4497c9;border-radius:1.2px"></div>
<div class="t" style="left:231.2px;width:200px;top:217.39px;height:9.50px;justify-content:center;font-size:4.32px;font-weight:400;color:#f0f0f0;transform:scaleX(0.9259);transform-origin:50% 50%;-webkit-text-stroke:0px #f0f0f0;">Sent</div>
<div class="t" style="left:355.5px;top:215.00px;height:14.27px;justify-content:flex-start;font-size:6.67px;font-weight:400;color:#555;transform:scaleX(0.8696);transform-origin:0 50%;-webkit-text-stroke:0.04px #555;">03/06/2019</div>
<div class="t" style="left:404px;top:215.00px;height:14.27px;justify-content:flex-start;font-size:6.61px;font-weight:400;color:#4a8cd8;transform:scaleX(0.8696);transform-origin:0 50%;-webkit-text-stroke:0.04px #4a8cd8;">INV-19-0030</div>
<div class="t" style="left:458.1px;top:215.00px;height:14.27px;justify-content:flex-start;font-size:6.44px;font-weight:400;color:#4a8cd8;transform:scaleX(0.8696);transform-origin:0 50%;-webkit-text-stroke:0.04px #4a8cd8;">Alvin Lewis</div>
<div class="t" style="right:24.50px;top:215.00px;height:14.27px;justify-content:flex-end;font-size:6.44px;font-weight:400;color:#555;transform:scaleX(0.8696);transform-origin:100% 50%;-webkit-text-stroke:0.04px #555;">$31,727.70</div>
<svg style="position:absolute;left:581.5px;top:217.64px" width="6" height="6.4" viewBox="0 0 12 13"><path d="M1 1H7.8L11 4.2V12H1Z" fill="#eef3fc" stroke="#6d9be0" stroke-width="1.5"/><path d="M7.5 1V4.5H11" fill="none" stroke="#6d9be0" stroke-width="1.2"/><path d="M3.2 10C4.5 8.5 5 7 5 5.5C6 7.5 7.5 8.5 9 8.8" fill="none" stroke="#9dbcec" stroke-width="1"/></svg>
<div style="position:absolute;left:307px;top:227.67000000000002px;width:285.00px;height:0.80px;background:#efefef"></div>
<div style="position:absolute;left:311.5px;top:230.36px;width:39.40px;height:9.5px;background:#ababab;border-radius:1.2px"></div>
<div class="t" style="left:231.2px;width:200px;top:231.66px;height:9.50px;justify-content:center;font-size:4.32px;font-weight:400;color:#f0f0f0;transform:scaleX(0.9259);transform-origin:50% 50%;-webkit-text-stroke:0px #f0f0f0;">Draft</div>
<div class="t" style="left:355.5px;top:229.27px;height:14.27px;justify-content:flex-start;font-size:6.67px;font-weight:400;color:#555;transform:scaleX(0.8696);transform-origin:0 50%;-webkit-text-stroke:0.04px #555;">03/06/2019</div>
<div class="t" style="left:404px;top:229.27px;height:14.27px;justify-content:flex-start;font-size:6.61px;font-weight:400;color:#4a8cd8;transform:scaleX(0.8696);transform-origin:0 50%;-webkit-text-stroke:0.04px #4a8cd8;">INV-19-0029</div>
<div class="t" style="left:458.1px;top:229.27px;height:14.27px;justify-content:flex-start;font-size:6.44px;font-weight:400;color:#4a8cd8;transform:scaleX(0.8696);transform-origin:0 50%;-webkit-text-stroke:0.04px #4a8cd8;">Alvin Lewis</div>
<div class="t" style="right:24.50px;top:229.27px;height:14.27px;justify-content:flex-end;font-size:6.44px;font-weight:400;color:#555;transform:scaleX(0.8696);transform-origin:100% 50%;-webkit-text-stroke:0.04px #555;">$0.00</div>
<svg style="position:absolute;left:581.5px;top:231.91px" width="6" height="6.4" viewBox="0 0 12 13"><path d="M1 1H7.8L11 4.2V12H1Z" fill="#eef3fc" stroke="#6d9be0" stroke-width="1.5"/><path d="M7.5 1V4.5H11" fill="none" stroke="#6d9be0" stroke-width="1.2"/><path d="M3.2 10C4.5 8.5 5 7 5 5.5C6 7.5 7.5 8.5 9 8.8" fill="none" stroke="#9dbcec" stroke-width="1"/></svg>
<div style="position:absolute;left:307px;top:242.54px;width:285.00px;height:13.67px;background:#f8f8f8"></div>
<div style="position:absolute;left:307px;top:241.94px;width:285.00px;height:0.80px;background:#efefef"></div>
<div style="position:absolute;left:311.5px;top:244.62px;width:39.40px;height:9.5px;background:#ababab;border-radius:1.2px"></div>
<div class="t" style="left:231.2px;width:200px;top:245.93px;height:9.50px;justify-content:center;font-size:4.32px;font-weight:400;color:#f0f0f0;transform:scaleX(0.9259);transform-origin:50% 50%;-webkit-text-stroke:0px #f0f0f0;">Draft</div>
<div class="t" style="left:355.5px;top:243.54px;height:14.27px;justify-content:flex-start;font-size:6.67px;font-weight:400;color:#555;transform:scaleX(0.8696);transform-origin:0 50%;-webkit-text-stroke:0.04px #555;">03/06/2019</div>
<div class="t" style="left:404px;top:243.54px;height:14.27px;justify-content:flex-start;font-size:6.61px;font-weight:400;color:#4a8cd8;transform:scaleX(0.8696);transform-origin:0 50%;-webkit-text-stroke:0.04px #4a8cd8;">INV-19-0028</div>
<div class="t" style="left:458.1px;top:243.54px;height:14.27px;justify-content:flex-start;font-size:6.44px;font-weight:400;color:#4a8cd8;transform:scaleX(0.8696);transform-origin:0 50%;-webkit-text-stroke:0.04px #4a8cd8;">Dale Gardner</div>
<div class="t" style="right:24.50px;top:243.54px;height:14.27px;justify-content:flex-end;font-size:6.44px;font-weight:400;color:#555;transform:scaleX(0.8696);transform-origin:100% 50%;-webkit-text-stroke:0.04px #555;">$0.00</div>
<svg style="position:absolute;left:581.5px;top:246.18px" width="6" height="6.4" viewBox="0 0 12 13"><path d="M1 1H7.8L11 4.2V12H1Z" fill="#eef3fc" stroke="#6d9be0" stroke-width="1.5"/><path d="M7.5 1V4.5H11" fill="none" stroke="#6d9be0" stroke-width="1.2"/><path d="M3.2 10C4.5 8.5 5 7 5 5.5C6 7.5 7.5 8.5 9 8.8" fill="none" stroke="#9dbcec" stroke-width="1"/></svg>
<div style="position:absolute;left:307px;top:256.21000000000004px;width:285.00px;height:0.80px;background:#efefef"></div>
<div style="position:absolute;left:311.5px;top:258.90px;width:39.40px;height:9.5px;background:#ababab;border-radius:1.2px"></div>
<div class="t" style="left:231.2px;width:200px;top:260.20px;height:9.50px;justify-content:center;font-size:4.32px;font-weight:400;color:#f0f0f0;transform:scaleX(0.9259);transform-origin:50% 50%;-webkit-text-stroke:0px #f0f0f0;">Draft</div>
<div class="t" style="left:355.5px;top:257.81px;height:14.27px;justify-content:flex-start;font-size:6.67px;font-weight:400;color:#555;transform:scaleX(0.8696);transform-origin:0 50%;-webkit-text-stroke:0.04px #555;">03/14/2019</div>
<div class="t" style="left:404px;top:257.81px;height:14.27px;justify-content:flex-start;font-size:6.61px;font-weight:400;color:#4a8cd8;transform:scaleX(0.8696);transform-origin:0 50%;-webkit-text-stroke:0.04px #4a8cd8;">INV-19-0027</div>
<div class="t" style="left:458.1px;top:257.81px;height:14.27px;justify-content:flex-start;font-size:6.44px;font-weight:400;color:#4a8cd8;transform:scaleX(0.8696);transform-origin:0 50%;-webkit-text-stroke:0.04px #4a8cd8;">Jasveer Arwehan</div>
<div class="t" style="right:24.50px;top:257.81px;height:14.27px;justify-content:flex-end;font-size:6.44px;font-weight:400;color:#555;transform:scaleX(0.8696);transform-origin:100% 50%;-webkit-text-stroke:0.04px #555;">$0.00</div>
<svg style="position:absolute;left:581.5px;top:260.45px" width="6" height="6.4" viewBox="0 0 12 13"><path d="M1 1H7.8L11 4.2V12H1Z" fill="#eef3fc" stroke="#6d9be0" stroke-width="1.5"/><path d="M7.5 1V4.5H11" fill="none" stroke="#6d9be0" stroke-width="1.2"/><path d="M3.2 10C4.5 8.5 5 7 5 5.5C6 7.5 7.5 8.5 9 8.8" fill="none" stroke="#9dbcec" stroke-width="1"/></svg>
<div style="position:absolute;left:307px;top:271.08000000000004px;width:285.00px;height:13.67px;background:#f8f8f8"></div>
<div style="position:absolute;left:307px;top:270.48px;width:285.00px;height:0.80px;background:#efefef"></div>
<div style="position:absolute;left:311.5px;top:273.17px;width:39.40px;height:9.5px;background:#ababab;border-radius:1.2px"></div>
<div class="t" style="left:231.2px;width:200px;top:274.47px;height:9.50px;justify-content:center;font-size:4.32px;font-weight:400;color:#f0f0f0;transform:scaleX(0.9259);transform-origin:50% 50%;-webkit-text-stroke:0px #f0f0f0;">Draft</div>
<div class="t" style="left:355.5px;top:272.08px;height:14.27px;justify-content:flex-start;font-size:6.67px;font-weight:400;color:#555;transform:scaleX(0.8696);transform-origin:0 50%;-webkit-text-stroke:0.04px #555;">03/06/2019</div>
<div class="t" style="left:404px;top:272.08px;height:14.27px;justify-content:flex-start;font-size:6.61px;font-weight:400;color:#4a8cd8;transform:scaleX(0.8696);transform-origin:0 50%;-webkit-text-stroke:0.04px #4a8cd8;">QUO-19-0024</div>
<div class="t" style="left:458.1px;top:272.08px;height:14.27px;justify-content:flex-start;font-size:6.44px;font-weight:400;color:#4a8cd8;transform:scaleX(0.8696);transform-origin:0 50%;-webkit-text-stroke:0.04px #4a8cd8;">Alvin Lewis</div>
<div class="t" style="right:24.50px;top:272.08px;height:14.27px;justify-content:flex-end;font-size:6.44px;font-weight:400;color:#555;transform:scaleX(0.8696);transform-origin:100% 50%;-webkit-text-stroke:0.04px #555;">$0.00</div>
<svg style="position:absolute;left:581.5px;top:274.72px" width="6" height="6.4" viewBox="0 0 12 13"><path d="M1 1H7.8L11 4.2V12H1Z" fill="#eef3fc" stroke="#6d9be0" stroke-width="1.5"/><path d="M7.5 1V4.5H11" fill="none" stroke="#6d9be0" stroke-width="1.2"/><path d="M3.2 10C4.5 8.5 5 7 5 5.5C6 7.5 7.5 8.5 9 8.8" fill="none" stroke="#9dbcec" stroke-width="1"/></svg>
<div style="position:absolute;left:307px;top:284.75px;width:285.00px;height:0.80px;background:#efefef"></div>
<div style="position:absolute;left:311.5px;top:287.44px;width:39.40px;height:9.5px;background:#ababab;border-radius:1.2px"></div>
<div class="t" style="left:231.2px;width:200px;top:288.74px;height:9.50px;justify-content:center;font-size:4.32px;font-weight:400;color:#f0f0f0;transform:scaleX(0.9259);transform-origin:50% 50%;-webkit-text-stroke:0px #f0f0f0;">Draft</div>
<div class="t" style="left:355.5px;top:286.35px;height:14.27px;justify-content:flex-start;font-size:6.67px;font-weight:400;color:#555;transform:scaleX(0.8696);transform-origin:0 50%;-webkit-text-stroke:0.04px #555;">05/13/2018</div>
<div class="t" style="left:404px;top:286.35px;height:14.27px;justify-content:flex-start;font-size:6.61px;font-weight:400;color:#4a8cd8;transform:scaleX(0.8696);transform-origin:0 50%;-webkit-text-stroke:0.04px #4a8cd8;">INV-18-0026</div>
<div class="t" style="left:458.1px;top:286.35px;height:14.27px;justify-content:flex-start;font-size:6.44px;font-weight:400;color:#4a8cd8;transform:scaleX(0.8696);transform-origin:0 50%;-webkit-text-stroke:0.04px #4a8cd8;">Stockton Cabs</div>
<div class="t" style="right:24.50px;top:286.35px;height:14.27px;justify-content:flex-end;font-size:6.44px;font-weight:400;color:#555;transform:scaleX(0.8696);transform-origin:100% 50%;-webkit-text-stroke:0.04px #555;">$235,935.00</div>
<svg style="position:absolute;left:581.5px;top:288.99px" width="6" height="6.4" viewBox="0 0 12 13"><path d="M1 1H7.8L11 4.2V12H1Z" fill="#eef3fc" stroke="#6d9be0" stroke-width="1.5"/><path d="M7.5 1V4.5H11" fill="none" stroke="#6d9be0" stroke-width="1.2"/><path d="M3.2 10C4.5 8.5 5 7 5 5.5C6 7.5 7.5 8.5 9 8.8" fill="none" stroke="#9dbcec" stroke-width="1"/></svg>
<div style="position:absolute;left:307px;top:299.62px;width:285.00px;height:13.67px;background:#f8f8f8"></div>
<div style="position:absolute;left:307px;top:299.02px;width:285.00px;height:0.80px;background:#efefef"></div>
<div style="position:absolute;left:311.5px;top:301.70px;width:39.40px;height:9.5px;background:#f6a33a;border-radius:1.2px"></div>
<div class="t" style="left:231.2px;width:200px;top:303.00px;height:9.50px;justify-content:center;font-size:4.32px;font-weight:400;color:#f0f0f0;transform:scaleX(0.9259);transform-origin:50% 50%;-webkit-text-stroke:0px #f0f0f0;">Viewed</div>
<div class="t" style="left:355.5px;top:300.62px;height:14.27px;justify-content:flex-start;font-size:7.13px;font-weight:700;color:#d24a4a;transform:scaleX(0.8696);transform-origin:0 50%;-webkit-text-stroke:0.1px #d24a4a;">05/09/2018</div>
<div class="t" style="left:404px;top:300.62px;height:14.27px;justify-content:flex-start;font-size:6.61px;font-weight:400;color:#4a8cd8;transform:scaleX(0.8696);transform-origin:0 50%;-webkit-text-stroke:0.04px #4a8cd8;">INV-18-0025</div>
<div class="t" style="left:458.1px;top:300.62px;height:14.27px;justify-content:flex-start;font-size:6.44px;font-weight:400;color:#4a8cd8;transform:scaleX(0.8696);transform-origin:0 50%;-webkit-text-stroke:0.04px #4a8cd8;">James J. Bowman</div>
<div class="t" style="right:24.50px;top:300.62px;height:14.27px;justify-content:flex-end;font-size:6.44px;font-weight:400;color:#555;transform:scaleX(0.8696);transform-origin:100% 50%;-webkit-text-stroke:0.04px #555;">$29,000.00</div>
<svg style="position:absolute;left:581.5px;top:303.25px" width="6" height="6.4" viewBox="0 0 12 13"><path d="M1 1H7.8L11 4.2V12H1Z" fill="#eef3fc" stroke="#6d9be0" stroke-width="1.5"/><path d="M7.5 1V4.5H11" fill="none" stroke="#6d9be0" stroke-width="1.2"/><path d="M3.2 10C4.5 8.5 5 7 5 5.5C6 7.5 7.5 8.5 9 8.8" fill="none" stroke="#9dbcec" stroke-width="1"/></svg>
<div style="position:absolute;left:307px;top:313.29px;width:285.00px;height:0.80px;background:#efefef"></div>
<div style="position:absolute;left:311.5px;top:315.98px;width:39.40px;height:9.5px;background:#4aa84a;border-radius:1.2px"></div>
<div class="t" style="left:231.2px;width:200px;top:317.28px;height:9.50px;justify-content:center;font-size:4.32px;font-weight:400;color:#f0f0f0;transform:scaleX(0.9259);transform-origin:50% 50%;-webkit-text-stroke:0px #f0f0f0;">Paid<svg style="margin-left:3.4px;position:relative;top:-0.9px" width="4.8" height="4.8" viewBox="0 0 10 10"><circle cx="5" cy="5" r="4.6" fill="#e4f2e4"/><path d="M2.6 7.4L7.4 2.6" stroke="#4cac4c" stroke-width="1.6"/><circle cx="5" cy="5" r="2.4" fill="none" stroke="#4cac4c" stroke-width="1.2"/></svg></div>
<div class="t" style="left:355.5px;top:314.89px;height:14.27px;justify-content:flex-start;font-size:6.67px;font-weight:400;color:#555;transform:scaleX(0.8696);transform-origin:0 50%;-webkit-text-stroke:0.04px #555;">04/27/2018</div>
<div class="t" style="left:404px;top:314.89px;height:14.27px;justify-content:flex-start;font-size:6.61px;font-weight:400;color:#4a8cd8;transform:scaleX(0.8696);transform-origin:0 50%;-webkit-text-stroke:0.04px #4a8cd8;">INV-18-0024</div>
<div class="t" style="left:458.1px;top:314.89px;height:14.27px;justify-content:flex-start;font-size:6.44px;font-weight:400;color:#4a8cd8;transform:scaleX(0.8696);transform-origin:0 50%;-webkit-text-stroke:0.04px #4a8cd8;">Waltermart Supplies</div>
<div class="t" style="right:24.50px;top:314.89px;height:14.27px;justify-content:flex-end;font-size:6.44px;font-weight:400;color:#555;transform:scaleX(0.8696);transform-origin:100% 50%;-webkit-text-stroke:0.04px #555;">$0.00</div>
<svg style="position:absolute;left:581.5px;top:317.53px" width="6" height="6.4" viewBox="0 0 12 13"><path d="M1 1H7.8L11 4.2V12H1Z" fill="#eef3fc" stroke="#6d9be0" stroke-width="1.5"/><path d="M7.5 1V4.5H11" fill="none" stroke="#6d9be0" stroke-width="1.2"/><path d="M3.2 10C4.5 8.5 5 7 5 5.5C6 7.5 7.5 8.5 9 8.8" fill="none" stroke="#9dbcec" stroke-width="1"/></svg>
<div style="position:absolute;left:307px;top:328.16px;width:285.00px;height:13.67px;background:#f8f8f8"></div>
<div style="position:absolute;left:307px;top:327.56px;width:285.00px;height:0.80px;background:#efefef"></div>
<div style="position:absolute;left:311.5px;top:330.25px;width:39.40px;height:9.5px;background:#4aa84a;border-radius:1.2px"></div>
<div class="t" style="left:231.2px;width:200px;top:331.55px;height:9.50px;justify-content:center;font-size:4.32px;font-weight:400;color:#f0f0f0;transform:scaleX(0.9259);transform-origin:50% 50%;-webkit-text-stroke:0px #f0f0f0;">Paid<svg style="margin-left:3.4px;position:relative;top:-0.9px" width="4.8" height="4.8" viewBox="0 0 10 10"><circle cx="5" cy="5" r="4.6" fill="#e4f2e4"/><path d="M2.6 7.4L7.4 2.6" stroke="#4cac4c" stroke-width="1.6"/><circle cx="5" cy="5" r="2.4" fill="none" stroke="#4cac4c" stroke-width="1.2"/></svg></div>
<div class="t" style="left:355.5px;top:329.16px;height:14.27px;justify-content:flex-start;font-size:6.67px;font-weight:400;color:#555;transform:scaleX(0.8696);transform-origin:0 50%;-webkit-text-stroke:0.04px #555;">03/24/2018</div>
<div class="t" style="left:404px;top:329.16px;height:14.27px;justify-content:flex-start;font-size:6.61px;font-weight:400;color:#4a8cd8;transform:scaleX(0.8696);transform-origin:0 50%;-webkit-text-stroke:0.04px #4a8cd8;">INV-18-0023</div>
<div class="t" style="left:458.1px;top:329.16px;height:14.27px;justify-content:flex-start;font-size:6.44px;font-weight:400;color:#4a8cd8;transform:scaleX(0.8696);transform-origin:0 50%;-webkit-text-stroke:0.04px #4a8cd8;">Stockton Cabs</div>
<div class="t" style="right:24.50px;top:329.16px;height:14.27px;justify-content:flex-end;font-size:6.44px;font-weight:400;color:#555;transform:scaleX(0.8696);transform-origin:100% 50%;-webkit-text-stroke:0.04px #555;">$0.00</div>
<svg style="position:absolute;left:581.5px;top:331.80px" width="6" height="6.4" viewBox="0 0 12 13"><path d="M1 1H7.8L11 4.2V12H1Z" fill="#eef3fc" stroke="#6d9be0" stroke-width="1.5"/><path d="M7.5 1V4.5H11" fill="none" stroke="#6d9be0" stroke-width="1.2"/><path d="M3.2 10C4.5 8.5 5 7 5 5.5C6 7.5 7.5 8.5 9 8.8" fill="none" stroke="#9dbcec" stroke-width="1"/></svg>
<div style="position:absolute;left:307px;top:341.83000000000004px;width:285.00px;height:0.80px;background:#efefef"></div>
<div style="position:absolute;left:311.5px;top:344.52px;width:39.40px;height:9.5px;background:#4aa84a;border-radius:1.2px"></div>
<div class="t" style="left:231.2px;width:200px;top:345.82px;height:9.50px;justify-content:center;font-size:4.32px;font-weight:400;color:#f0f0f0;transform:scaleX(0.9259);transform-origin:50% 50%;-webkit-text-stroke:0px #f0f0f0;">Paid<svg style="margin-left:3.4px;position:relative;top:-0.9px" width="4.8" height="4.8" viewBox="0 0 10 10"><circle cx="5" cy="5" r="4.6" fill="#e4f2e4"/><path d="M2.6 7.4L7.4 2.6" stroke="#4cac4c" stroke-width="1.6"/><circle cx="5" cy="5" r="2.4" fill="none" stroke="#4cac4c" stroke-width="1.2"/></svg></div>
<div class="t" style="left:355.5px;top:343.43px;height:14.27px;justify-content:flex-start;font-size:6.67px;font-weight:400;color:#555;transform:scaleX(0.8696);transform-origin:0 50%;-webkit-text-stroke:0.04px #555;">03/10/2018</div>
<div class="t" style="left:404px;top:343.43px;height:14.27px;justify-content:flex-start;font-size:6.61px;font-weight:400;color:#4a8cd8;transform:scaleX(0.8696);transform-origin:0 50%;-webkit-text-stroke:0.04px #4a8cd8;">INV-18-0022</div>
<div class="t" style="left:458.1px;top:343.43px;height:14.27px;justify-content:flex-start;font-size:6.44px;font-weight:400;color:#4a8cd8;transform:scaleX(0.8696);transform-origin:0 50%;-webkit-text-stroke:0.04px #4a8cd8;">Lorraine Gibson</div>
<div class="t" style="right:24.50px;top:343.43px;height:14.27px;justify-content:flex-end;font-size:6.44px;font-weight:400;color:#555;transform:scaleX(0.8696);transform-origin:100% 50%;-webkit-text-stroke:0.04px #555;">$0.00</div>
<svg style="position:absolute;left:581.5px;top:346.07px" width="6" height="6.4" viewBox="0 0 12 13"><path d="M1 1H7.8L11 4.2V12H1Z" fill="#eef3fc" stroke="#6d9be0" stroke-width="1.5"/><path d="M7.5 1V4.5H11" fill="none" stroke="#6d9be0" stroke-width="1.2"/><path d="M3.2 10C4.5 8.5 5 7 5 5.5C6 7.5 7.5 8.5 9 8.8" fill="none" stroke="#9dbcec" stroke-width="1"/></svg>
<div style="position:absolute;left:307px;top:356.1px;width:285.00px;height:0.80px;background:#e6e6e6"></div>
<div style="position:absolute;left:307px;top:356.90000000000003px;width:285.00px;height:10.90px;background:#f6f6f6"></div>
<div class="t" style="right:10.20px;top:356.90px;height:12.20px;justify-content:flex-end;font-size:5.75px;font-weight:400;color:#4a8cd8;transform:scaleX(0.8737);transform-origin:100% 50%;-webkit-text-stroke:0.04px #4a8cd8;">View All</div>
<div class="t" style="left:325.5px;top:183.10px;height:18.30px;justify-content:flex-start;font-size:6.50px;font-weight:700;color:#333;transform:scaleX(0.9053);transform-origin:0 50%;-webkit-text-stroke:0.1px #333;">Recent Invoices</div>
<svg style="position:absolute;left:313.6px;top:188.3px" width="6.6" height="6.2" viewBox="0 0 13.2 12.4"><path d="M3.0 3.9A4.6 4.6 0 1 1 3.5 9.2" fill="none" stroke="#2a2a3a" stroke-width="2.1"/><circle cx="2.8" cy="3.7" r="1.6" fill="#2a2a3a"/><circle cx="7" cy="6.2" r="1" fill="#999"/></svg>
<div style="position:absolute;left:6.6px;top:378px;width:287.40px;height:45.60px;box-sizing:border-box;border:1px solid #eaeaea;border-radius:2px;background:#fff;overflow:hidden"><div style="position:absolute;left:0;top:0;right:0;height:18.00px;background:#f4f4f4;border-bottom:1px solid #eaeaea"></div></div>
<div class="t" style="left:25.6px;top:378.80px;height:19.00px;justify-content:flex-start;font-size:6.50px;font-weight:700;color:#333;transform:scaleX(0.9123);transform-origin:0 50%;-webkit-text-stroke:0.1px #333;">Projects</div>
<svg style="position:absolute;left:13.9px;top:384.6px" width="6.8" height="5.4" viewBox="0 0 14 11"><rect x="0" y="0" width="3" height="3.2" fill="#555"/><rect x="4" y="0" width="10" height="3.2" fill="#3a3a3a"/><rect x="0" y="3.9" width="3" height="3.2" fill="#555"/><rect x="4" y="3.9" width="10" height="3.2" fill="#3a3a3a"/><rect x="0" y="7.8" width="3" height="3.2" fill="#555"/><rect x="4" y="7.8" width="10" height="3.2" fill="#3a3a3a"/></svg>
<div class="t" style="left:9.6px;top:397.20px;height:13.60px;justify-content:flex-start;font-size:6.61px;font-weight:700;color:#333;transform:scaleX(0.8696);transform-origin:0 50%;-webkit-text-stroke:0.1px #333;">Project name</div>
<div class="t" style="left:190.7px;top:397.20px;height:13.60px;justify-content:flex-start;font-size:6.67px;font-weight:700;color:#333;transform:scaleX(0.8696);transform-origin:0 50%;-webkit-text-stroke:0.1px #333;">Client Name</div>
<div style="position:absolute;left:8.5px;top:409.1px;width:283.10px;height:1.10px;background:#dedede"></div>
<div style="position:absolute;left:8.5px;top:410.2px;width:283.10px;height:11.90px;background:#f8f8f8"></div>
<div class="t" style="left:9.6px;top:410.80px;height:13.10px;justify-content:flex-start;font-size:6.60px;font-weight:400;color:#4a8cd8;transform:scaleX(0.8696);transform-origin:0 50%;-webkit-text-stroke:0.04px #4a8cd8;">Stockton cab replacement</div>
<div class="t" style="left:190.7px;top:410.80px;height:13.10px;justify-content:flex-start;font-size:6.44px;font-weight:400;color:#4a8cd8;transform:scaleX(0.8696);transform-origin:0 50%;-webkit-text-stroke:0.04px #4a8cd8;">Stockton Cabs</div>
<div style="position:absolute;left:306px;top:378px;width:287.00px;height:75.00px;box-sizing:border-box;border:1px solid #eaeaea;border-radius:2px;background:#fff;overflow:hidden"><div style="position:absolute;left:0;top:0;right:0;height:18.00px;background:#f4f4f4;border-bottom:1px solid #eaeaea"></div></div>
<div class="t" style="left:325.7px;top:378.80px;height:19.00px;justify-content:flex-start;font-size:6.50px;font-weight:700;color:#333;transform:scaleX(0.8637);transform-origin:0 50%;-webkit-text-stroke:0.1px #333;">Tasks</div>
<svg style="position:absolute;left:313.6px;top:384.6px" width="6.4" height="5.6" viewBox="0 0 13 11"><path d="M9 5.5V10.2H0.9V1.6H7" fill="none" stroke="#333" stroke-width="1.7"/><path d="M2.6 4.6L5 7L11.8 0.6" fill="none" stroke="#333" stroke-width="2"/></svg>
<div class="t" style="left:311.7px;top:397.20px;height:13.60px;justify-content:flex-start;font-size:6.55px;font-weight:700;color:#333;transform:scaleX(0.8696);transform-origin:0 50%;-webkit-text-stroke:0.1px #333;">Status</div>
<div class="t" style="left:355.5px;top:397.20px;height:13.60px;justify-content:flex-start;font-size:6.55px;font-weight:700;color:#333;transform:scaleX(0.8696);transform-origin:0 50%;-webkit-text-stroke:0.1px #333;">Task name</div>
<div class="t" style="left:449.9px;top:397.20px;height:13.60px;justify-content:flex-start;font-size:6.55px;font-weight:700;color:#333;transform:scaleX(0.8696);transform-origin:0 50%;-webkit-text-stroke:0.1px #333;">Finish date</div>
<div class="t" style="left:496.8px;top:397.20px;height:13.60px;justify-content:flex-start;font-size:6.55px;font-weight:700;color:#333;transform:scaleX(0.8696);transform-origin:0 50%;-webkit-text-stroke:0.1px #333;">Project</div>
<div style="position:absolute;left:307.4px;top:409.1px;width:284.30px;height:1.10px;background:#dedede"></div>
<div style="position:absolute;left:307.4px;top:410.8px;width:284.30px;height:13.57px;background:#f8f8f8"></div>
<div style="position:absolute;left:311.7px;top:412.83px;width:39.50px;height:9.5px;background:#4aa84a;border-radius:1.2px"></div>
<div class="t" style="left:231.45px;width:200px;top:414.13px;height:9.50px;justify-content:center;font-size:4.32px;font-weight:400;color:#f0f0f0;transform:scaleX(0.9259);transform-origin:50% 50%;-webkit-text-stroke:0px #f0f0f0;">Invoiced</div>
<div class="t" style="left:355.5px;top:410.80px;height:14.17px;justify-content:flex-start;font-size:6.44px;font-weight:400;color:#4a8cd8;transform:scaleX(0.8696);transform-origin:0 50%;-webkit-text-stroke:0.04px #4a8cd8;">Replace cars #034 - #041</div>
<div class="t" style="left:449.9px;top:410.80px;height:14.17px;justify-content:flex-start;font-size:6.55px;font-weight:400;color:#b5504d;transform:scaleX(0.8696);transform-origin:0 50%;-webkit-text-stroke:0.04px #b5504d;">06/01/2018</div>
<div class="t" style="left:496.8px;top:410.80px;height:14.17px;justify-content:flex-start;font-size:6.60px;font-weight:400;color:#4a8cd8;transform:scaleX(0.8696);transform-origin:0 50%;-webkit-text-stroke:0.04px #4a8cd8;">Stockton cab replacement</div>
<div style="position:absolute;left:307.4px;top:424.37px;width:284.30px;height:0.80px;background:#efefef"></div>
<div style="position:absolute;left:311.7px;top:427.00px;width:39.50px;height:9.5px;background:#4aa84a;border-radius:1.2px"></div>
<div class="t" style="left:231.45px;width:200px;top:428.31px;height:9.50px;justify-content:center;font-size:4.32px;font-weight:400;color:#f0f0f0;transform:scaleX(0.9259);transform-origin:50% 50%;-webkit-text-stroke:0px #f0f0f0;">Invoiced</div>
<div class="t" style="left:355.5px;top:424.97px;height:14.17px;justify-content:flex-start;font-size:6.44px;font-weight:400;color:#4a8cd8;transform:scaleX(0.8696);transform-origin:0 50%;-webkit-text-stroke:0.04px #4a8cd8;">Replace cars #021 - #033</div>
<div class="t" style="left:449.9px;top:424.97px;height:14.17px;justify-content:flex-start;font-size:6.55px;font-weight:400;color:#b5504d;transform:scaleX(0.8696);transform-origin:0 50%;-webkit-text-stroke:0.04px #b5504d;">06/30/2017</div>
<div class="t" style="left:496.8px;top:424.97px;height:14.17px;justify-content:flex-start;font-size:6.60px;font-weight:400;color:#4a8cd8;transform:scaleX(0.8696);transform-origin:0 50%;-webkit-text-stroke:0.04px #4a8cd8;">Stockton cab replacement</div>
<div style="position:absolute;left:307.4px;top:439.14px;width:284.30px;height:13.57px;background:#f8f8f8"></div>
<div style="position:absolute;left:307.4px;top:438.53999999999996px;width:284.30px;height:0.80px;background:#efefef"></div>
<div style="position:absolute;left:311.7px;top:441.17px;width:39.50px;height:9.5px;background:#4aa84a;border-radius:1.2px"></div>
<div class="t" style="left:231.45px;width:200px;top:442.47px;height:9.50px;justify-content:center;font-size:4.32px;font-weight:400;color:#f0f0f0;transform:scaleX(0.9259);transform-origin:50% 50%;-webkit-text-stroke:0px #f0f0f0;">Invoiced</div>
<div class="t" style="left:355.5px;top:439.14px;height:14.17px;justify-content:flex-start;font-size:6.44px;font-weight:400;color:#4a8cd8;transform:scaleX(0.8696);transform-origin:0 50%;-webkit-text-stroke:0.04px #4a8cd8;">Replace cars #005 - #020</div>
<div class="t" style="left:449.9px;top:439.14px;height:14.17px;justify-content:flex-start;font-size:6.55px;font-weight:400;color:#b5504d;transform:scaleX(0.8696);transform-origin:0 50%;-webkit-text-stroke:0.04px #b5504d;">03/31/2017</div>
<div class="t" style="left:496.8px;top:439.14px;height:14.17px;justify-content:flex-start;font-size:6.60px;font-weight:400;color:#4a8cd8;transform:scaleX(0.8696);transform-origin:0 50%;-webkit-text-stroke:0.04px #4a8cd8;">Stockton cab replacement</div>
<div style="position:absolute;left:0;top:0;width:600px;height:469px;box-sizing:border-box;border:1px solid #1c1c1c;pointer-events:none"></div>
</div></body></html>
